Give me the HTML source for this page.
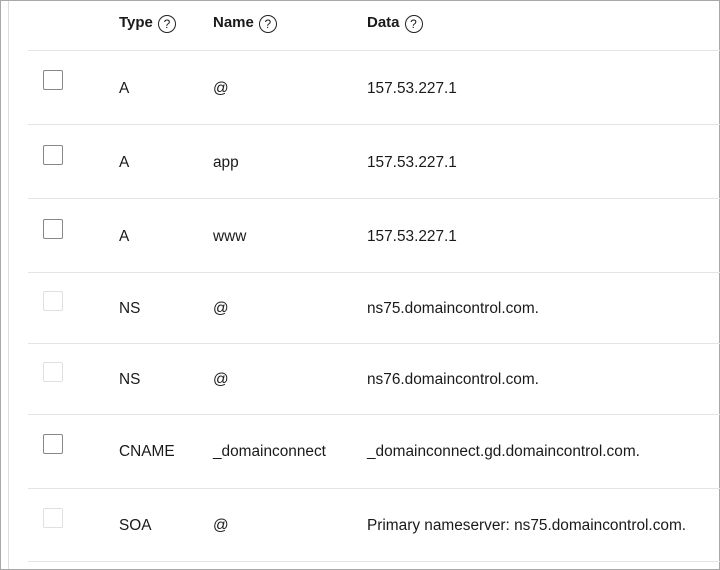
<!DOCTYPE html>
<html><head><style>
*{margin:0;padding:0;box-sizing:border-box}
body{width:720px;height:570px;background:#fff;position:relative;overflow:hidden;font-family:"Liberation Sans",sans-serif;color:#1a1a1a;font-size:15.4px}
.frame{position:absolute;left:0;top:0;width:720px;height:570px;border:1px solid #a8a8a8}
.inner{position:absolute;left:8px;top:1px;width:1px;height:568px;background:#ddd}
.line{position:absolute;left:28px;right:0;height:1px;background:#e4e4e4}
.t{position:absolute;line-height:18px;white-space:nowrap}
.h{font-weight:bold;font-size:15px}
.q{display:inline-block;width:18px;height:18px;border:1.3px solid #222;border-radius:50%;font-size:12px;line-height:16px;text-align:center;font-weight:normal;margin-left:5px;vertical-align:-1px}
.cb{position:absolute;left:43px;width:20px;height:20px;border:1.5px solid #888;border-radius:2px;background:#fff}
.cb.d{border-color:#e0e0e0}
</style></head><body>
<div class="frame"></div><div class="inner"></div>
<div class="t h" style="left:119px;top:14px">Type<span class="q">?</span></div>
<div class="t h" style="left:213px;top:14px">Name<span class="q">?</span></div>
<div class="t h" style="left:367px;top:14px">Data<span class="q">?</span></div>
<div class="line" style="top:50px"></div>
<div class="cb" style="top:70px"></div><div class="t" style="left:119px;top:80px">A</div><div class="t" style="left:213px;top:80px">@</div><div class="t" style="left:367px;top:80px">157.53.227.1</div>
<div class="line" style="top:124px"></div>
<div class="cb" style="top:145px"></div><div class="t" style="left:119px;top:154px">A</div><div class="t" style="left:213px;top:154px">app</div><div class="t" style="left:367px;top:154px">157.53.227.1</div>
<div class="line" style="top:198px"></div>
<div class="cb" style="top:219px"></div><div class="t" style="left:119px;top:228px">A</div><div class="t" style="left:213px;top:228px">www</div><div class="t" style="left:367px;top:228px">157.53.227.1</div>
<div class="line" style="top:272px"></div>
<div class="cb d" style="top:291px"></div><div class="t" style="left:119px;top:300px">NS</div><div class="t" style="left:213px;top:300px">@</div><div class="t" style="left:367px;top:300px">ns75.domaincontrol.com.</div>
<div class="line" style="top:343px"></div>
<div class="cb d" style="top:362px"></div><div class="t" style="left:119px;top:371px">NS</div><div class="t" style="left:213px;top:371px">@</div><div class="t" style="left:367px;top:371px">ns76.domaincontrol.com.</div>
<div class="line" style="top:414px"></div>
<div class="cb" style="top:434px"></div><div class="t" style="left:119px;top:443px">CNAME</div><div class="t" style="left:213px;top:443px">_domainconnect</div><div class="t" style="left:367px;top:443px">_domainconnect.gd.domaincontrol.com.</div>
<div class="line" style="top:488px"></div>
<div class="cb d" style="top:508px"></div><div class="t" style="left:119px;top:517px">SOA</div><div class="t" style="left:213px;top:517px">@</div><div class="t" style="left:367px;top:517px">Primary nameserver: ns75.domaincontrol.com.</div>
<div class="line" style="top:561px"></div>
</body></html>
